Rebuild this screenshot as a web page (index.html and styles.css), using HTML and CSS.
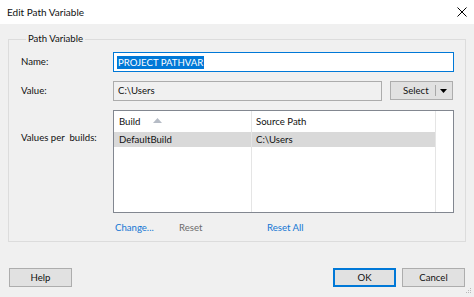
FILE: index.html
```html
<!DOCTYPE html>
<html>
<head>
<meta charset="utf-8">
<link rel="stylesheet" href="styles.css">
</head>
<body>
<div class="window">
  <header class="titlebar">
    <span class="title">Edit Path Variable</span>
    <svg class="close" width="10" height="10" viewBox="0 0 10 10"><path d="M0.5 0.5 L9.5 9.5 M9.5 0.5 L0.5 9.5" stroke="#000" stroke-width="1" fill="none"/></svg>
  </header>
  <main class="content">
    <fieldset class="group">
      <legend class="legend">Path Variable</legend>
      <div class="form">
        <label class="lbl">Name:</label>
        <div class="field field-focus"><span class="selected-text">PROJECT PATHVAR</span></div>

        <label class="lbl">Value:</label>
        <div class="value-row">
          <div class="field field-ro">C:\Users</div>
          <button class="btn split">
            <span class="split-label">Select</span>
            <span class="split-sep"></span>
            <svg class="split-arrow" width="7" height="4" viewBox="0 0 7 4"><path d="M0 0 H7 L3.5 4 Z" fill="#000"/></svg>
          </button>
        </div>

        <label class="lbl lbl-top">Values per&nbsp; builds:</label>
        <div class="table">
          <div class="col col-build">
            <div class="th">Build <svg class="sort" width="9" height="5" viewBox="0 0 9 5"><path d="M0 5 L4.5 0 L9 5 Z" fill="#b6bcc6"/></svg></div>
            <div class="td td-sel">DefaultBuild</div>
          </div>
          <div class="col col-path">
            <div class="th">Source Path</div>
            <div class="td td-sel">C:\Users</div>
          </div>
          <div class="col col-rest"></div>
        </div>

        <span></span>
        <div class="links">
          <a class="link link-change">Change...</a>
          <span class="link link-disabled">Reset</span>
          <a class="link">Reset All</a>
        </div>
      </div>
    </fieldset>
    <footer class="buttons">
      <button class="btn btn-dlg">Help</button>
      <div class="buttons-right">
        <button class="btn btn-dlg btn-default">OK</button>
        <button class="btn btn-dlg">Cancel</button>
      </div>
    </footer>
    <svg class="grip" width="7" height="7" viewBox="0 0 7 7">
      <rect x="5" y="0" width="1" height="1" fill="#b8b8b8"/>
      <rect x="3" y="2" width="1" height="1" fill="#b8b8b8"/>
      <rect x="5" y="2" width="1" height="1" fill="#b8b8b8"/>
      <rect x="1" y="4" width="1" height="1" fill="#b8b8b8"/>
      <rect x="3" y="4" width="1" height="1" fill="#b8b8b8"/>
      <rect x="5" y="4" width="1" height="1" fill="#b8b8b8"/>
    </svg>
  </main>
</div>
</body>
</html>
```

FILE: styles.css
```css
* { box-sizing: border-box; }
html, body { margin: 0; padding: 0; }
body {
  width: 474px;
  height: 297px;
  overflow: hidden;
  font-family: Lato, "Noto Sans", sans-serif;
  font-size: 9.6px;
  color: #111;
  background: #f0f0f0;
}
.window { width: 474px; height: 297px; display: flex; flex-direction: column; }

.titlebar {
  height: 24px;
  background: #fff;
  display: flex;
  align-items: center;
  justify-content: space-between;
  padding: 0 7px 1px 7px;
  flex: none;
}
.title { font-size: 10px; line-height: 16px; }

.content {
  flex: 1;
  position: relative;
  padding-top: 7px;
  display: flex;
  flex-direction: column;
}

.group {
  margin: 0 8px;
  padding: 5px 11px 5px 12px;
  border: 1px solid #dcdcdc;
  min-width: 0;
}
.legend {
  padding: 0 2px;
  margin-left: 5px;
  line-height: 16px;
}

.form {
  display: grid;
  grid-template-columns: 92px 341px;
  row-gap: 9px;
  align-items: center;
}
.lbl { line-height: 16px; }
.lbl-top { align-self: start; margin-top: 20px; white-space: pre; }

.field {
  height: 20px;
  border: 1px solid #7a7a7a;
  background: #fff;
  padding: 0 4px;
  line-height: 18px;
  white-space: nowrap;
}
.field-focus { border-color: #0078d7; padding-left: 3px; display: flex; align-items: center; }
.selected-text { background: #0078d7; color: #fff; line-height: 13px; padding: 0 1px; }
.field-ro { background: #f0f0f0; border-color: #acacac; width: 269px; height: 20px; }

.value-row { display: flex; align-items: flex-start; gap: 8px; }

.btn {
  font-family: inherit;
  font-size: 9.6px;
  color: #111;
  background: #e1e1e1;
  border: 1px solid #adadad;
  padding: 0;
  margin: 0;
  height: 19px;
  line-height: 16px;
}
.split { width: 63px; display: flex; align-items: center; padding-left: 12px; }
.split-label { width: 32px; text-align: left; }
.split-sep { width: 1px; height: 11px; background: #a8a8a8; margin-right: 4px; }
.split-arrow { display: block; }

.table {
  height: 103px;
  border: 1px solid #828790;
  background: #fff;
  display: flex;
}
.col { display: flex; flex-direction: column; border-right: 1px solid #e5e5e5; }
.col-build { width: 138px; }
.col-path { width: 184px; }
.col-rest { flex: 1; border-right: none; }
.th { height: 21px; padding-left: 5px; display: flex; align-items: center; line-height: 16px; }
.sort { margin-left: 13px; margin-top: -2px; }
.td { height: 15px; padding-left: 5px; line-height: 15px; }
.td-sel { background: #d9d9d9; }
.col-path .th, .col-path .td { padding-left: 4px; }

.links { display: flex; height: 16px; line-height: 16px; margin-top: -2px; }
.link { color: #1477d4; cursor: pointer; }
.link-change { width: 66px; padding-left: 2px; }
.link-disabled { color: #6d6d6d; width: 88px; }

.buttons {
  display: flex;
  justify-content: space-between;
  padding: 26px 9px 0 9px;
}
.buttons-right { display: flex; gap: 6px; }
.btn-dlg { width: 63px; height: 19px; }
.btn-default { border: 2px solid #0078d7; line-height: 14px; }

.grip { position: absolute; right: 2px; bottom: 2px; }
```
